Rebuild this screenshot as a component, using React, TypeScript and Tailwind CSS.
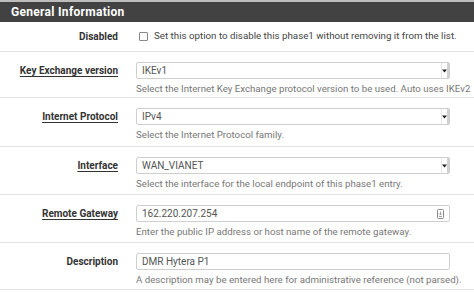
const font = { fontFamily: 'Roboto, "Liberation Sans", sans-serif' }

type Row = {
  label: string
  link?: boolean
  kind: 'check' | 'select' | 'input'
  value?: string
  help: string
  icon?: boolean
  h: string
}

const rows: Row[] = [
  { label: 'Key Exchange version', link: true, kind: 'select', value: 'IKEv1', help: 'Select the Internet Key Exchange protocol version to be used. Auto uses IKEv2', h: 'h-[46px]' },
  { label: 'Internet Protocol', link: true, kind: 'select', value: 'IPv4', help: 'Select the Internet Protocol family.', h: 'h-[49px]' },
  { label: 'Interface', link: true, kind: 'select', value: 'WAN_VIANET', help: 'Select the interface for the local endpoint of this phase1 entry.', h: 'h-[48px]' },
  { label: 'Remote Gateway', link: true, kind: 'input', value: '162.220.207.254', help: 'Enter the public IP address or host name of the remote gateway.', icon: true, h: 'h-[48px]' },
  { label: 'Description', kind: 'input', value: 'DMR Hytera P1', help: 'A description may be entered here for administrative reference (not parsed).', h: 'h-[47px]' },
]

const Arrow = () => (
  <div className="flex h-full w-[8px] items-center justify-center border-l border-r-2 border-[#d0d0d0] border-l-[#e6e6e6]">
    <svg width="5" height="4" viewBox="0 0 5 4">
      <path d="M0 0.5 L5 0.5 L2.5 3.5 Z" fill="#222" />
    </svg>
  </div>
)

const GatewayIcon = () => (
  <svg width="7" height="10" viewBox="0 0 7 10" className="mr-[5px]">
    <rect x="0.5" y="0.5" width="6" height="9" rx="1" fill="none" stroke="#888" />
    <path d="M3.5 2.5 V5.5 M2 4.5 L3.5 6 L5 4.5" stroke="#888" strokeWidth="0.8" fill="none" />
    <path d="M2 7.5 H5" stroke="#888" strokeWidth="0.8" />
  </svg>
)

export default function App() {
  return (
    <div className="w-[474px] h-[292px] bg-white overflow-hidden" style={font}>
      <div className="h-[2px] bg-[#bdbdbd]" />
      <div className="h-[20px] bg-[#424242] flex items-center pl-[11px]">
        <span className="text-white text-[12px] leading-none font-bold tracking-[0.3px]">General Information</span>
      </div>

      {/* Disabled */}
      <div className="flex h-[30px] items-center border-b border-[#e3e3e3]">
        <div className="w-[118px] shrink-0 text-right text-[10px] font-bold text-[#333]">Disabled</div>
        <div className="ml-[21px] flex items-center gap-[6px]">
          <div className="w-[9px] h-[9px] border border-[#888] rounded-[1px] bg-white" />
          <span className="text-[9.75px] text-[#444] whitespace-nowrap">Set this option to disable this phase1 without removing it from the list.</span>
        </div>
      </div>

      {rows.map((r) => (
        <div key={r.label} className={`flex ${r.h} border-b border-[#e3e3e3] pt-[10px]`}>
          <div className="w-[118px] shrink-0 text-right text-[10px] leading-[17px] font-bold text-[#333]">
            <span className={r.link ? 'underline decoration-[1px] underline-offset-[2px]' : ''}>{r.label}</span>
          </div>
          <div className="ml-[18px] flex flex-col">
            <div className="w-[314px] h-[17px] border border-[#cfcfcf] rounded-[2px] flex items-center justify-between">
              <span className="pl-[5px] text-[10px] text-[#555]">{r.value}</span>
              {r.kind === 'select' && <Arrow />}
              {r.icon && <GatewayIcon />}
            </div>
            <div className="mt-[3px] text-[9.7px] leading-[14px] text-[#777] whitespace-nowrap">{r.help}</div>
          </div>
        </div>
      ))}
    </div>
  )
}
